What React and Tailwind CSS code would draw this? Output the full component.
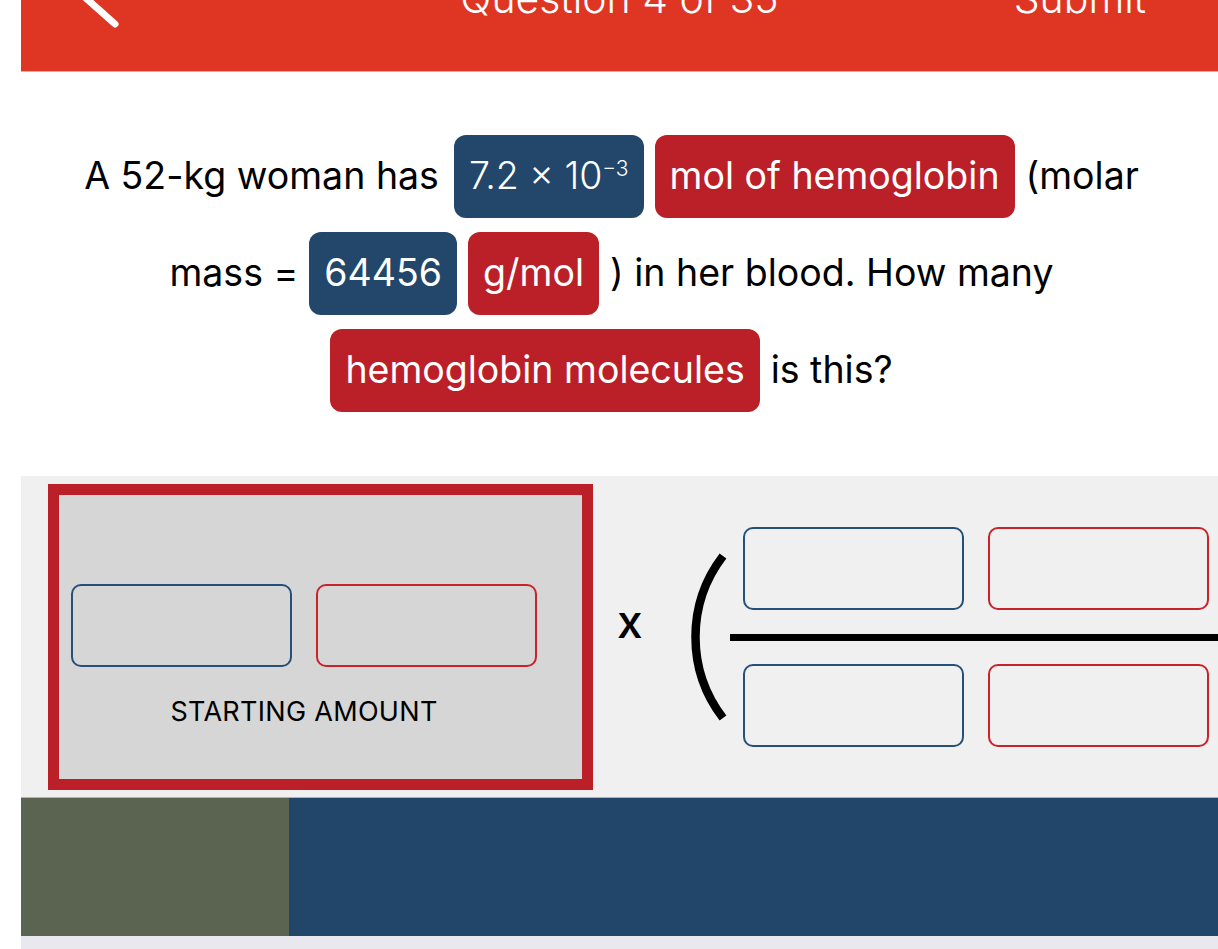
import React from "react";

const font = { fontFamily: "Inter, 'Noto Sans', sans-serif" };

function Pill({ color, children, light }) {
  return (
    <span
      className={`inline-flex items-center h-[83px] px-[15px] rounded-[12px] text-white whitespace-nowrap ${color} ${light ? "font-light" : "font-normal"}`}
    >
      {children}
    </span>
  );
}

function Slot({ color }) {
  return <div className={`w-[221px] h-[83px] rounded-[10px] border-2 ${color}`} />;
}

export default function App() {
  return (
    <div className="bg-white w-[1218px] h-[949px] overflow-hidden" style={font}>
      <div className="ml-[21px] w-[1197px] flex flex-col">
        {/* Header */}
        <header className="h-[72px] bg-[#df3623] border-b border-[#f2a79c] grid grid-cols-[1fr_auto_1fr] items-start overflow-hidden text-white">
          <div className="flex">
            <svg width="70" height="80" viewBox="0 0 70 80" className="ml-[29px] -mt-[50px] shrink-0">
              <polyline points="65,-22 11,26 65,74" fill="none" stroke="white" strokeWidth="7" strokeLinecap="round" strokeLinejoin="round" />
            </svg>
          </div>
          <div className="text-[41px] leading-[40px] font-light -mt-[22px] whitespace-nowrap">Question 4 of 35</div>
          <div className="flex justify-end pr-[72px]">
            <div className="text-[41px] leading-[40px] font-light -mt-[22px]">Submit</div>
          </div>
        </header>

        {/* Question text */}
        <section className="pt-[56px] pb-[57px] pr-[16px] text-[37.5px] text-black flex flex-col items-center">
          <div className="h-[97px] flex items-center gap-[11px] whitespace-nowrap">
            <span className="mr-[4px]">A 52-kg woman has</span>
            <Pill color="bg-[#22476a]" light>
              <span>
                7.2 × 10<span className="align-super text-[21px]">−3</span>
              </span>
            </Pill>
            <Pill color="bg-[#bb1f28]">mol of hemoglobin</Pill>
            <span>(molar</span>
          </div>
          <div className="h-[97px] flex items-center gap-[11px] whitespace-nowrap">
            <span>mass =</span>
            <Pill color="bg-[#22476a]">64456</Pill>
            <Pill color="bg-[#bb1f28]">g/mol</Pill>
            <span>) in her blood. How many</span>
          </div>
          <div className="h-[97px] flex items-center gap-[11px] whitespace-nowrap">
            <Pill color="bg-[#bb1f28]">hemoglobin molecules</Pill>
            <span>is this?</span>
          </div>
        </section>

        {/* Equation area */}
        <section className="h-[321px] bg-[#f0f0f0] flex items-center overflow-hidden">
          <div className="ml-[27px] shrink-0 w-[545px] h-[306px] border-[11px] border-[#bb1f28] bg-[#d6d6d6]">
            <div className="pt-[89px] pl-[12px] flex flex-col items-center w-fit">
              <div className="flex gap-[24px]">
                <Slot color="border-[#24507a]" />
                <Slot color="border-[#c8222b]" />
              </div>
              <div className="mt-[29px] text-[27px] leading-[32px] text-black tracking-[0.3px]">STARTING AMOUNT</div>
            </div>
          </div>

          <div className="ml-[24px] w-[24px] shrink-0 text-center text-[46px] leading-[46px] font-medium text-black -mt-[32px]">x</div>

          <svg width="40" height="170" viewBox="0 0 40 170" className="ml-[48px] shrink-0">
            <path d="M34 4 A133 133 0 0 0 34 166" fill="none" stroke="black" strokeWidth="8.5" />
          </svg>

          <div className="ml-[1px] shrink-0 flex flex-col">
            <div className="pl-[13px] flex gap-[24px]">
              <Slot color="border-[#24507a]" />
              <Slot color="border-[#c8222b]" />
            </div>
            <div className="mt-[24px] h-[7px] w-[520px] bg-black" />
            <div className="mt-[23px] pl-[13px] flex gap-[24px]">
              <Slot color="border-[#24507a]" />
              <Slot color="border-[#c8222b]" />
            </div>
          </div>
        </section>

        {/* Bottom bars */}
        <section className="h-[139px] flex border-t border-[#a9b3bd]">
          <div className="w-[268px] bg-[#5a6450]" />
          <div className="flex-1 bg-[#224669]" />
        </section>
        <div className="h-[13px] bg-[#e9e8ef]" />
      </div>
    </div>
  );
}
